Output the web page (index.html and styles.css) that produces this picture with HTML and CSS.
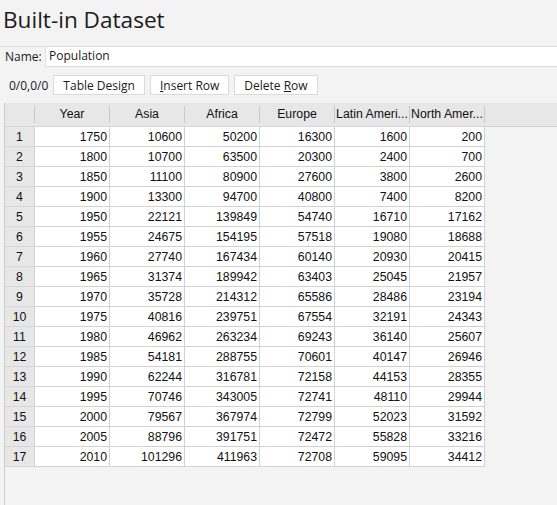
FILE: index.html
```html
<!DOCTYPE html>
<html lang="en">
<head>
    <meta charset="UTF-8">
    <title>Built-in Dataset</title>
    <link rel="stylesheet" href="styles.css">
</head>
<body>
    <!-- Title -->
    <div class="title">Built-in Dataset</div>

    <!-- Name field -->
    <div class="name-row">
        <span class="name-label">Name:</span>
        <div class="name-input">Population</div>
    </div>

    <!-- Toolbar -->
    <div class="toolbar">
        <span class="pos">0/0,0/0</span>
        <button class="btn">Table Design</button>
        <button class="btn"><u>I</u>nsert Row</button>
        <button class="btn">Delete <u>R</u>ow</button>
    </div>

    <!-- Data grid -->
    <div class="grid" id="grid">
        <div class="head">
            <div class="hcell corner"></div>
            <div class="hcell">Year</div>
            <div class="hcell">Asia</div>
            <div class="hcell">Africa</div>
            <div class="hcell">Europe</div>
            <div class="hcell">Latin Ameri...</div>
            <div class="hcell">North Amer...</div>
        </div>
        <div id="rows"></div>
    </div>

    <script>
        const data = [
            [1750, 10600, 50200, 16300, 1600, 200],
            [1800, 10700, 63500, 20300, 2400, 700],
            [1850, 11100, 80900, 27600, 3800, 2600],
            [1900, 13300, 94700, 40800, 7400, 8200],
            [1950, 22121, 139849, 54740, 16710, 17162],
            [1955, 24675, 154195, 57518, 19080, 18688],
            [1960, 27740, 167434, 60140, 20930, 20415],
            [1965, 31374, 189942, 63403, 25045, 21957],
            [1970, 35728, 214312, 65586, 28486, 23194],
            [1975, 40816, 239751, 67554, 32191, 24343],
            [1980, 46962, 263234, 69243, 36140, 25607],
            [1985, 54181, 288755, 70601, 40147, 26946],
            [1990, 62244, 316781, 72158, 44153, 28355],
            [1995, 70746, 343005, 72741, 48110, 29944],
            [2000, 79567, 367974, 72799, 52023, 31592],
            [2005, 88796, 391751, 72472, 55828, 33216],
            [2010, 101296, 411963, 72708, 59095, 34412]
        ];

        const rows = document.getElementById('rows');
        data.forEach(function(values, i) {
            const row = document.createElement('div');
            row.className = 'row';
            const num = document.createElement('div');
            num.className = 'rnum';
            num.textContent = i + 1;
            row.appendChild(num);
            values.forEach(function(v) {
                const cell = document.createElement('div');
                cell.className = 'cell';
                cell.textContent = v;
                row.appendChild(cell);
            });
            rows.appendChild(row);
        });
    </script>
</body>
</html>
```

FILE: styles.css
```css
html, body {
    height: 100%;
}

body {
    margin: 0;
    background: #f3f3f3;
    font-family: "Open Sans", "Noto Sans", sans-serif;
    color: #1a1a1a;
    display: flex;
    flex-direction: column;
    overflow: hidden;
}

/* Title */
.title {
    height: 46px;
    box-sizing: border-box;
    padding: 4px 0 0 3px;
    font-size: 22.6px;
    line-height: 32px;
    color: #1b1b1b;
}

/* Name row */
.name-row {
    display: flex;
    align-items: stretch;
    height: 20px;
    border-top: 1px solid #dedede;
    font-size: 12px;
}

.name-label {
    width: 40px;
    padding-left: 5px;
    line-height: 19px;
}

.name-input {
    flex: 1;
    background: #fff;
    border-left: 1px solid #e0e0e0;
    border-bottom: 1px solid #dcdcdc;
    padding-left: 3px;
    line-height: 18px;
}

/* Toolbar */
.toolbar {
    display: flex;
    align-items: center;
    gap: 5px;
    margin-top: 8px;
    padding-left: 9px;
    font-size: 12px;
}

.btn {
    height: 20px;
    padding: 0 9px;
    background: #fff;
    border: 1px solid #dadada;
    font-family: inherit;
    font-size: 12px;
    color: #1a1a1a;
    line-height: 17px;
}

.btn u {
    text-underline-offset: 1px;
}

/* Grid */
.grid {
    flex: 1;
    margin: 8px 0 0 4px;
    border-left: 1px solid #cfcfcf;
    font-family: "Liberation Sans", Arial, sans-serif;
    font-size: 12.3px;
    color: #111;
}

.head {
    display: flex;
    align-items: center;
    height: 23px;
    background: #e7e7e7;
    border-bottom: 1px solid #d6d6d6;
}

.hcell {
    width: 74px;
    height: 17px;
    line-height: 17px;
    border-right: 1px solid #c9c9c9;
    text-align: center;
    white-space: nowrap;
    overflow: hidden;
}

.hcell.corner {
    width: 29px;
}

.row {
    display: flex;
    height: 20px;
}

.rnum {
    width: 29px;
    background: #e7e7e7;
    border-right: 1px solid #d2d2d2;
    border-bottom: 1px solid #d6d6d6;
    text-align: center;
    line-height: 20px;
}

.cell {
    width: 72px;
    padding-right: 2px;
    background: #fff;
    border-right: 1px solid #d2d2d2;
    border-bottom: 1px solid #d2d2d2;
    text-align: right;
    line-height: 20px;
}
```
